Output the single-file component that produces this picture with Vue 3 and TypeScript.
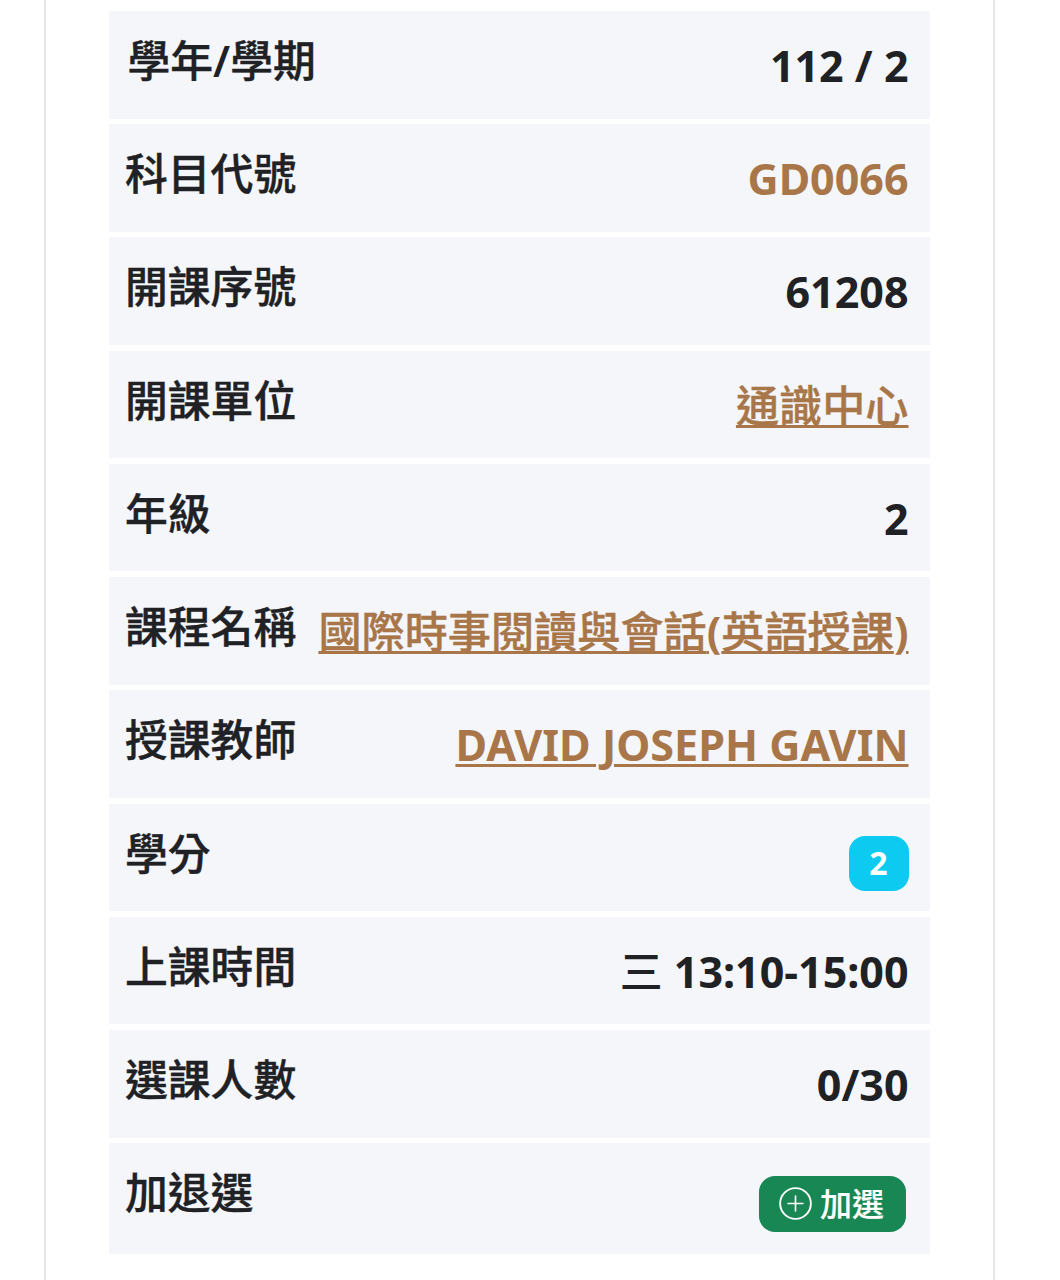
<template>
  <div class="page">
    <div class="card">
      <div v-for="row in rows" :key="row.label" class="row">
        <div class="label" :class="{ indent: row.label.includes('/') }">
          <span v-for="(part, i) in split(row.label)" :key="i" :class="{ cjk: isCjk(part) }">{{ part }}</span>
        </div>
        <a v-if="row.type === 'link'" class="value link">
          <span v-for="(part, i) in split(row.value)" :key="i" :class="{ cjk: isCjk(part) }">{{ part }}</span>
        </a>
        <span v-else-if="row.type === 'badge'" class="badge">{{ row.value }}</span>
        <button v-else-if="row.type === 'button'" class="add-btn">
          <svg class="add-icon" viewBox="0 0 16 16" fill="currentColor">
            <path d="M8 15A7 7 0 1 1 8 1a7 7 0 0 1 0 14m0 .9A7.9 7.9 0 1 0 8 .1a7.9 7.9 0 0 0 0 15.8" />
            <path d="M8 4a.4.4 0 0 1 .4.4v3.2h3.2a.4.4 0 0 1 0 .8H8.4v3.2a.4.4 0 0 1-.8 0V8.4H4.4a.4.4 0 0 1 0-.8h3.2V4.4A.4.4 0 0 1 8 4" />
          </svg>
          <span>{{ row.value }}</span>
        </button>
        <span v-else class="value" :class="{ code: row.type === 'code' }">
          <span v-if="row.day" class="day">{{ row.day }}</span>
          {{ row.value }}
        </span>
      </div>
    </div>
  </div>
</template>

<script setup lang="ts">
interface Row {
  label: string
  value: string
  day?: string
  type?: 'code' | 'link' | 'badge' | 'button'
}

const rows: Row[] = [
  { label: '學年/學期', value: '112 / 2' },
  { label: '科目代號', value: 'GD0066', type: 'code' },
  { label: '開課序號', value: '61208' },
  { label: '開課單位', value: '通識中心', type: 'link' },
  { label: '年級', value: '2' },
  { label: '課程名稱', value: '國際時事閱讀與會話(英語授課)', type: 'link' },
  { label: '授課教師', value: 'DAVID JOSEPH GAVIN', type: 'link' },
  { label: '學分', value: '2', type: 'badge' },
  { label: '上課時間', value: '13:10-15:00', day: '三' },
  { label: '選課人數', value: '0/30' },
  { label: '加退選', value: '加選', type: 'button' }
]

// 將中文與英數符號分段，套用不同字重
const split = (text: string): string[] => text.match(/[\u4e00-\u9fff]+|[^\u4e00-\u9fff]+/g) ?? []

const isCjk = (text: string): boolean => /[\u4e00-\u9fff]/.test(text)
</script>

<style>
body {
  margin: 0;
  background: #fff;
}
</style>

<style scoped>
.page {
  box-sizing: border-box;
  width: 1060px;
  height: 1280px;
  padding: 0 65px 0 44px;
  overflow: hidden;
  font-family: 'Noto Sans', 'Noto Sans CJK TC', sans-serif;
  color: #202125;
}

.card {
  box-sizing: border-box;
  height: 1280px;
  padding: 11px 63px 0;
  border-left: 2px solid #e6e6e8;
  border-right: 2px solid #e6e6e8;
}

/* 每列資料 */
.row {
  box-sizing: border-box;
  display: flex;
  justify-content: space-between;
  height: 107.6px;
  margin-bottom: 5.64px;
  padding: 0 21.5px 0 16px;
  background: #f4f6fa;
}

.row:last-child {
  height: 111px;
}

.label {
  margin-top: 20px;
  font-size: 42.8px;
  font-weight: 600;
  line-height: 60px;
  white-space: nowrap;
}

.indent {
  padding-left: 2.5px;
}

.value {
  margin-top: 25px;
  font-size: 43px;
  font-weight: 700;
  line-height: 60px;
  white-space: nowrap;
}

/* 中文字重比數字略輕 */
.cjk {
  font-weight: 500;
  -webkit-text-stroke: 0.4px currentColor;
}

.day {
  font-weight: 500;
}

.code,
.link {
  color: #a87648;
}

.link {
  font-size: 43.15px;
  text-decoration: underline;
  text-decoration-thickness: 2.6px;
  text-underline-offset: 2.5px;
}

.badge {
  box-sizing: border-box;
  width: 60px;
  height: 55px;
  margin-top: 32.6px;
  border-radius: 16px;
  background: #0dcaf0;
  color: #fff;
  font-size: 32px;
  font-weight: 700;
  line-height: 54px;
  text-align: center;
}

/* 加選按鈕 */
.add-btn {
  box-sizing: border-box;
  display: flex;
  align-items: center;
  justify-content: center;
  gap: 8px;
  width: 147px;
  height: 56px;
  margin: 32.4px 2.5px 0 0;
  padding: 0 2px 0 0;
  border: none;
  border-radius: 16px;
  background: #198754;
  color: #fff;
  font-family: inherit;
  font-size: 32px;
  font-weight: 500;
  line-height: 56px;
  -webkit-text-stroke: 0.2px currentColor;
}

.add-icon {
  width: 33px;
  height: 33px;
}
</style>
